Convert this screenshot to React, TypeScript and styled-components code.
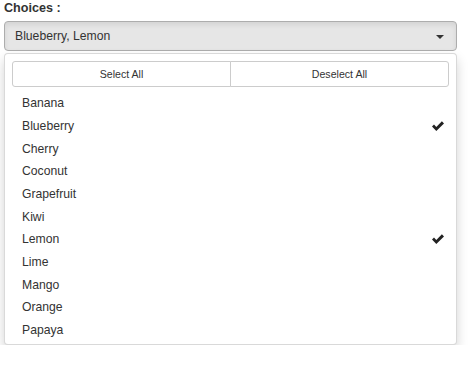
import React from "react";
import styled, { createGlobalStyle } from "styled-components";

const GlobalStyle = createGlobalStyle`
  body {
    margin: 0;
    background: #fff;
    font-family: "Liberation Sans", Arial, Helvetica, sans-serif;
    color: #333;
  }
`;

const Wrapper = styled.div`
  width: 453px;
  padding: 0 4px;
  display: flex;
  flex-direction: column;
`;

const Label = styled.label`
  display: block;
  font-weight: bold;
  font-size: 12.6px;
  line-height: 16px;
  margin-bottom: 5px;
  color: #333;
`;

const SelectButton = styled.button`
  box-sizing: border-box;
  height: 30px;
  width: 100%;
  display: flex;
  align-items: center;
  justify-content: space-between;
  padding: 0 12px 0 10px;
  background: #e6e6e6;
  border: 1px solid #adadad;
  border-radius: 4px;
  box-shadow: inset 0 3px 5px rgba(0, 0, 0, 0.08);
  font-family: inherit;
  font-size: 12.2px;
  color: #333;
`;

const Caret = styled.span`
  width: 0;
  height: 0;
  border-top: 4px solid #333;
  border-left: 4px solid transparent;
  border-right: 4px solid transparent;
  margin-top: 1px;
`;

const Dropdown = styled.div`
  box-sizing: border-box;
  margin-top: 2px;
  width: 100%;
  padding: 4px 0 3px;
  background: #fff;
  border: 1px solid rgba(0, 0, 0, 0.15);
  border-radius: 4px;
  box-shadow: 0 6px 12px rgba(0, 0, 0, 0.175);
`;

const ButtonGroup = styled.div`
  display: flex;
  margin: 3px 7px 5px;
`;

const GroupButton = styled.button<{ $first?: boolean }>`
  flex: 1;
  height: 26px;
  background: #fff;
  border: 1px solid #ccc;
  border-radius: ${(p) => (p.$first ? "3px 0 0 3px" : "0 3px 3px 0")};
  margin-left: ${(p) => (p.$first ? "0" : "-1px")};
  font-family: inherit;
  font-size: 10.6px;
  color: #333;
  padding: 0;
`;

const List = styled.ul`
  list-style: none;
  margin: 0;
  padding: 0;
`;

const Item = styled.li`
  height: 22.67px;
  display: flex;
  align-items: center;
  justify-content: space-between;
  padding: 0 12px 0 17px;
  font-size: 12.2px;
  color: #333;
`;

const CheckIcon = () => (
  <svg width="12" height="10" viewBox="0 0 12 10">
    <path d="M0 5.6 L2 3.6 L4.3 5.9 L9.9 0.3 L12 2.4 L4.3 10 Z" fill="#222" />
  </svg>
);

const FRUITS = [
  "Banana",
  "Blueberry",
  "Cherry",
  "Coconut",
  "Grapefruit",
  "Kiwi",
  "Lemon",
  "Lime",
  "Mango",
  "Orange",
  "Papaya",
];

const SELECTED = ["Blueberry", "Lemon"];

export default function App() {
  return (
    <Wrapper>
      <GlobalStyle />
      <Label>Choices :</Label>
      <SelectButton>
        <span>{SELECTED.join(", ")}</span>
        <Caret />
      </SelectButton>
      <Dropdown>
        <ButtonGroup>
          <GroupButton $first>Select All</GroupButton>
          <GroupButton>Deselect All</GroupButton>
        </ButtonGroup>
        <List>
          {FRUITS.map((fruit) => (
            <Item key={fruit}>
              <span>{fruit}</span>
              {SELECTED.includes(fruit) && <CheckIcon />}
            </Item>
          ))}
        </List>
      </Dropdown>
    </Wrapper>
  );
}
